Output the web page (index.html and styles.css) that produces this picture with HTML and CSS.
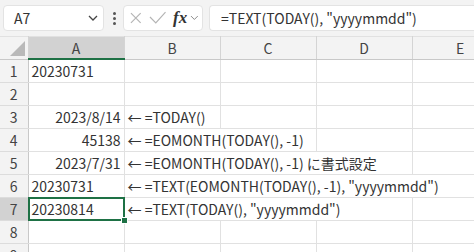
FILE: index.html
```html
<!DOCTYPE html>
<html lang="ja">
<head>
    <meta charset="UTF-8">
    <title>Excel</title>
    <link rel="stylesheet" href="styles.css">
</head>
<body>
    <div class="toolbar">
        <div class="name-box">
            <span>A7</span>
            <svg class="chev" width="10" height="6" viewBox="0 0 10 6"><path d="M1 1 L5 5 L9 1" fill="none" stroke="#444" stroke-width="1.3"/></svg>
        </div>
        <div class="dots"><i></i><i></i><i></i></div>
        <div class="fx-box">
            <svg width="14" height="14" viewBox="0 0 14 14"><path d="M2 2 L12 12 M12 2 L2 12" stroke="#b4b4b4" stroke-width="1.2"/></svg>
            <svg width="18" height="14" viewBox="0 0 18 14"><path d="M1 6 L7 12 L17 1" fill="none" stroke="#b4b4b4" stroke-width="1.2"/></svg>
            <span class="fx">fx</span>
            <svg class="chev-s" width="9" height="6" viewBox="0 0 9 6"><path d="M1 1 L4.5 4.5 L8 1" fill="none" stroke="#888" stroke-width="1"/></svg>
        </div>
        <div class="formula">=TEXT(TODAY(), "yyyymmdd")</div>
    </div>

    <table class="sheet">
        <colgroup>
            <col class="c-head">
            <col class="c-col">
            <col class="c-col">
            <col class="c-col">
            <col class="c-col">
            <col class="c-col">
        </colgroup>
        <thead>
            <tr>
                <th class="corner"><span class="tri"></span></th>
                <th class="sel">A</th>
                <th>B</th>
                <th>C</th>
                <th>D</th>
                <th>E</th>
            </tr>
        </thead>
        <tbody>
            <tr><td class="rh">1</td><td>20230731</td><td></td><td></td><td></td><td></td></tr>
            <tr><td class="rh">2</td><td></td><td></td><td></td><td></td><td></td></tr>
            <tr><td class="rh">3</td><td class="num">2023/8/14</td><td>← =TODAY()</td><td></td><td></td><td></td></tr>
            <tr><td class="rh">4</td><td class="num">45138</td><td class="ov">← =EOMONTH(TODAY(), -1)</td><td></td><td></td><td></td></tr>
            <tr><td class="rh">5</td><td class="num">2023/7/31</td><td class="ov">← =EOMONTH(TODAY(), -1) に書式設定</td><td class="ov"></td><td></td><td></td></tr>
            <tr><td class="rh">6</td><td>20230731</td><td class="ov">← =TEXT(EOMONTH(TODAY(), -1), "yyyymmdd")</td><td class="ov"></td><td class="ov"></td><td></td></tr>
            <tr><td class="rh rh-sel">7</td><td class="active">20230814</td><td class="ov">← =TEXT(TODAY(), "yyyymmdd")</td><td class="ov"></td><td></td><td></td></tr>
            <tr><td class="rh">8</td><td></td><td></td><td></td><td></td><td></td></tr>
            <tr><td class="rh">9</td><td></td><td></td><td></td><td></td><td></td></tr>
        </tbody>
    </table>
</body>
</html>
```

FILE: styles.css
```css
body {
    margin: 0;
    width: 474px;
    height: 252px;
    overflow: hidden;
    background-color: #fff;
    font-family: "Noto Sans CJK JP", "Noto Sans", sans-serif;
    color: #333;
}

.toolbar {
    display: flex;
    align-items: center;
    height: 36px;
    padding: 0 0 0 3px;
    background-color: #f3f3f3;
    box-sizing: border-box;
}

.name-box {
    display: flex;
    align-items: center;
    justify-content: space-between;
    width: 101px;
    height: 26px;
    box-sizing: border-box;
    padding: 0 5px 0 10px;
    background-color: #fff;
    border: 1px solid #e3e3e3;
    border-radius: 4px;
    font-size: 14px;
}

.dots {
    display: flex;
    flex-direction: column;
    gap: 2px;
    margin: 0 7px 0 9px;
}

.dots i {
    display: block;
    width: 3px;
    height: 3px;
    background-color: #555;
    border-radius: 50%;
}

.fx-box {
    display: flex;
    align-items: center;
    gap: 6px;
    width: 80px;
    height: 26px;
    box-sizing: border-box;
    padding: 0 3px 0 5px;
    background-color: #fff;
    border: 1px solid #e3e3e3;
    border-radius: 4px;
}

.fx {
    font-family: "Liberation Serif", serif;
    font-style: italic;
    font-weight: bold;
    font-size: 17px;
    color: #333;
    margin-left: 1px;
    margin-right: -3px;
}

.formula {
    flex: 1;
    margin-left: 6px;
    height: 26px;
    line-height: 24px;
    box-sizing: border-box;
    padding-left: 11px;
    background-color: #fff;
    border: 1px solid #e3e3e3;
    border-right: none;
    border-radius: 4px 0 0 4px;
    font-size: 14px;
    white-space: nowrap;
}

.sheet {
    table-layout: fixed;
    border-collapse: collapse;
    width: 508px;
    font-size: 14px;
}

.c-head {
    width: 28px;
}

.c-col {
    width: 96px;
}

.sheet th {
    height: 21px;
    padding: 0;
    background-color: #f3f3f3;
    border-top: 1px solid #e1e1e1;
    border-right: 1px solid #d4d4d4;
    border-bottom: 1px solid #c8c8c8;
    font-weight: normal;
    color: #444;
    font-size: 14px;
}

.sheet th.sel {
    background-color: #d2d2d2;
    border-bottom: 2px solid #1e7145;
}

.corner {
    position: relative;
}

.tri {
    position: absolute;
    right: 3px;
    bottom: 3px;
    width: 0;
    height: 0;
    border-left: 15px solid transparent;
    border-bottom: 15px solid #b9b9b9;
}

.sheet td {
    height: 22px;
    padding: 0 3px;
    border-right: 1px solid #e1e1e1;
    border-bottom: 1px solid #e1e1e1;
    white-space: nowrap;
    overflow: visible;
    line-height: 22px;
}

.sheet td.rh {
    padding: 0;
    text-align: center;
    background-color: #f3f3f3;
    border-right: 1px solid #c8c8c8;
    border-bottom: 1px solid #dcdcdc;
    color: #444;
    font-size: 14px;
}

.sheet td.rh-sel {
    background-color: #d2d2d2;
}

.sheet td.num {
    text-align: right;
}

.sheet td.ov {
    border-right-color: transparent;
}

.active {
    position: relative;
}

.active::before {
    content: "";
    position: absolute;
    left: -1px;
    top: -1px;
    right: -1px;
    bottom: -1px;
    border: 2px solid #1e7145;
}

.active::after {
    content: "";
    position: absolute;
    right: -4px;
    bottom: -4px;
    width: 5px;
    height: 5px;
    background-color: #1e7145;
    border: 1px solid #fff;
}
```
